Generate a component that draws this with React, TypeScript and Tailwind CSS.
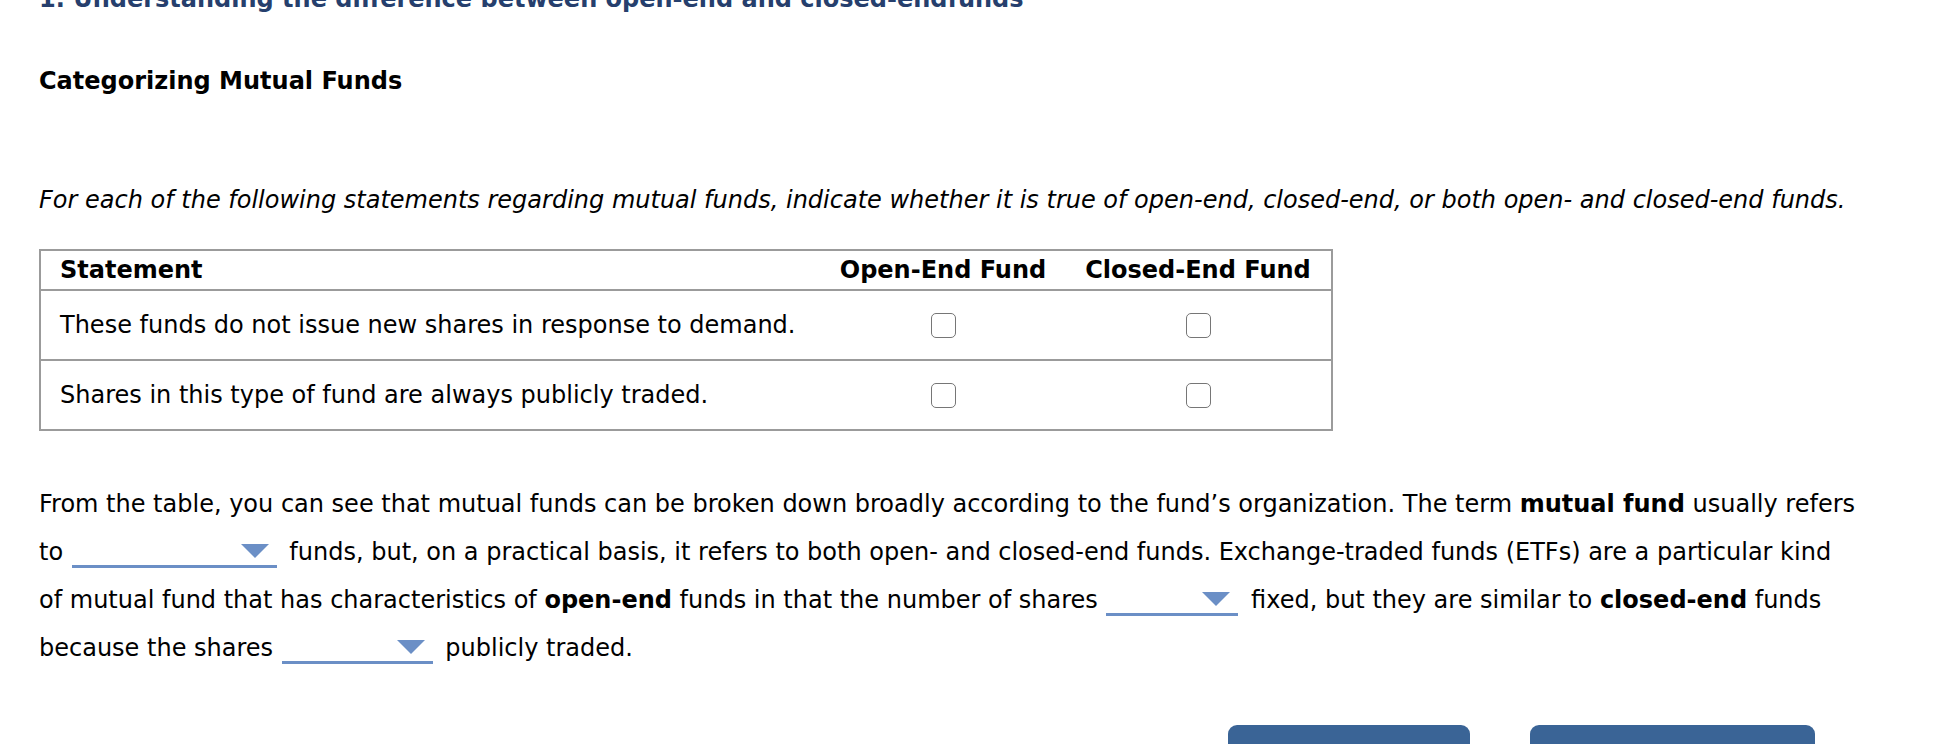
import type { ReactNode } from "react";

const ROWS = [
  "These funds do not issue new shares in response to demand.",
  "Shares in this type of fund are always publicly traded.",
];

function Checkbox() {
  return (
    <span className="block w-[25px] h-[25px] rounded-[5px] border-[1.5px] border-[#767676] bg-white" />
  );
}

function Dropdown({ width }: { width: string }) {
  return (
    <span
      className={`inline-block overflow-hidden align-[-8px] h-[28px] pt-[4px] pr-[8px] ml-[1px] mr-[5px] border-b-[3px] border-[#6b8fc6] ${width}`}
    >
      <svg className="block ml-auto" width="28" height="14" viewBox="0 0 28 14">
        <polygon points="0,0 28,0 14,14" fill="#6b8fc6" />
      </svg>
    </span>
  );
}

function B({ children }: { children: ReactNode }) {
  return <strong className="font-bold">{children}</strong>;
}

export default function App() {
  return (
    <div className="w-[1934px] h-[744px] overflow-hidden bg-white pl-[39px] font-['DejaVu_Sans',sans-serif] text-[24px] text-black">
      <h1 className="mt-[-15px] leading-[28px] font-bold text-[#263f6d] whitespace-nowrap">
        1. Understanding the difference between open-end and closed-endfunds
      </h1>

      <h2 className="mt-[54px] leading-[28px] font-bold">Categorizing Mutual Funds</h2>

      <p className="mt-[91px] leading-[28px] italic whitespace-nowrap">
        For each of the following statements regarding mutual funds, indicate whether it is true of open-end, closed-end, or both open- and closed-end funds.
      </p>

      <div className="mt-[35px] w-[1294px] border-2 border-[#9b9b9b]">
        <div className="grid grid-cols-[1fr_244px_266px] h-[38px] items-center leading-[28px] font-bold">
          <div className="pl-[19px]">Statement</div>
          <div className="text-center whitespace-nowrap">Open-End Fund</div>
          <div className="text-center whitespace-nowrap">Closed-End Fund</div>
        </div>
        {ROWS.map((r) => (
          <div
            key={r}
            className="grid grid-cols-[1fr_244px_266px] h-[70px] items-center border-t-2 border-[#9b9b9b] leading-[28px]"
          >
            <div className="pl-[19px]">{r}</div>
            <div className="flex justify-center">
              <Checkbox />
            </div>
            <div className="flex justify-center">
              <Checkbox />
            </div>
          </div>
        ))}
      </div>

      <p className="mt-[49px] w-[1870px] leading-[48px]">
        From the table, you can see that mutual funds can be broken down broadly according to the fund’s organization. The term <B>mutual fund</B> usually refers
        <br />
        to <Dropdown width="w-[205px]" /> funds, but, on a practical basis, it refers to both open- and closed-end funds. Exchange-traded funds (ETFs) are a particular kind
        <br />
        of mutual fund that has characteristics of <B>open-end</B> funds in that the number of shares <Dropdown width="w-[132px]" /> fixed, but they are similar to <B>closed-end</B> funds
        <br />
        because the shares <Dropdown width="w-[151px]" /> publicly traded.
      </p>

      <div className="mt-[53px] flex justify-end gap-[60px] pr-[119px]">
        <button aria-label="Grade It Now" className="w-[242px] h-[64px] rounded-[9px] bg-[#3a6496]" />
        <button aria-label="Save and Continue" className="w-[285px] h-[64px] rounded-[9px] bg-[#3a6496]" />
      </div>
    </div>
  );
}
